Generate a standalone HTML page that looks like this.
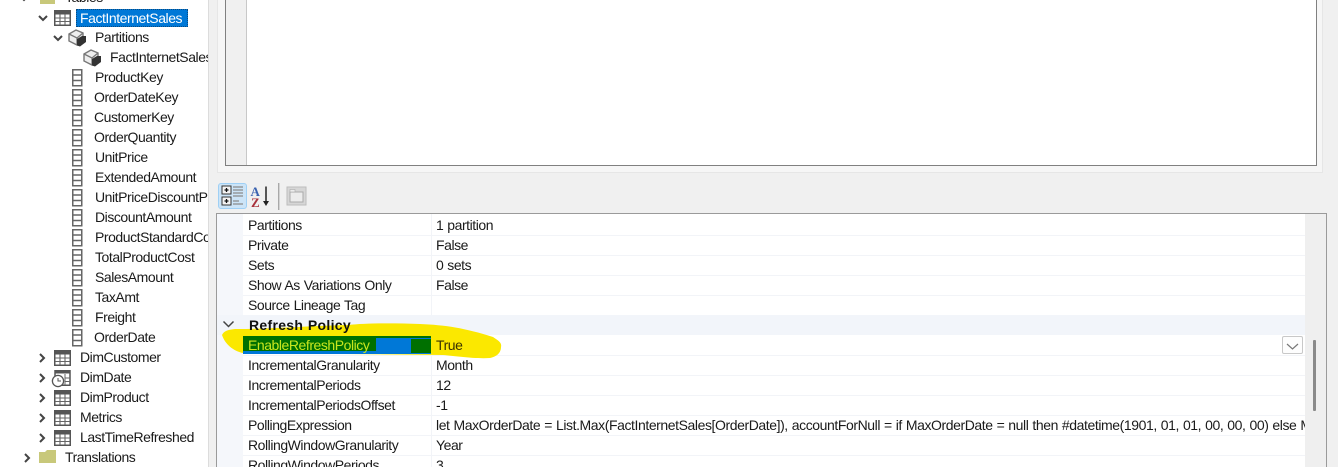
<!DOCTYPE html>
<html><head><meta charset="utf-8">
<style>
html,body{margin:0;padding:0;background:#f0f0f0}
#p{position:relative;width:1338px;height:467px;overflow:hidden;background:#f0f0f0;font-family:"Liberation Sans",sans-serif;font-size:14px;color:#1a1a1a;filter:blur(.35px)}
.t{position:absolute;white-space:nowrap;height:20px;line-height:20px;letter-spacing:-.45px;word-spacing:.5px}
.a{position:absolute}
svg{position:absolute;overflow:visible}
</style></head><body><div id="p">

<!-- tree panel -->
<div class="a" style="left:0;top:0;width:208px;height:467px;background:#fff"></div>
<div class="a" style="left:208px;top:0;width:1px;height:467px;background:#dcdcdc"></div>

<svg width="0" height="0" style="left:0;top:0">
<defs>
<g id="tbl"><rect x=".75" y=".75" width="15.5" height="14.5" fill="#fff" stroke="#555" stroke-width="1.5"/><rect x="1" y="1" width="15" height="3.5" fill="#555"/><path d="M6 4v11M11 4v11M1 8h15M1 11.5h15" stroke="#666" stroke-width="1.1" fill="none"/></g>
<g id="col"><rect x=".75" y=".75" width="9" height="16" fill="#fff" stroke="#666" stroke-width="1.5"/><path d="M1 6h8.5M1 11.5h8.5" stroke="#666" stroke-width="1.4"/></g>
<g id="cube"><path d="M1 5l7-4 7 3v7l-6 5-8-4z" fill="#eee" stroke="#777" stroke-width="1.4"/><path d="M1 5l8 4 6-5M9 9v7" stroke="#777" stroke-width="1.3" fill="none"/><path d="M9 10l5-3h4v6l-6 4.5-3-1z" fill="#333"/></g>
<path id="ex" d="M0 0l4 4 4-4" fill="none" stroke="#444" stroke-width="2"/>
<path id="co" d="M0 0l4 4-4 4" fill="none" stroke="#444" stroke-width="2"/>
</defs>
</svg>

<svg width="208" height="467" style="left:0;top:0">
<use href="#ex" x="20" y="-4"/>
<path d="M40-3h13l2 2v5H40z" fill="#c8c87a"/>
<use href="#ex" x="39" y="16"/>
<use href="#tbl" x="54" y="10"/>
<use href="#ex" x="54" y="36"/>
<use href="#cube" x="68" y="29"/>
<use href="#cube" x="83" y="49"/>
<use href="#col" x="72" y="69"/><use href="#col" x="72" y="89"/><use href="#col" x="72" y="109"/><use href="#col" x="72" y="129"/><use href="#col" x="72" y="149"/><use href="#col" x="72" y="169"/><use href="#col" x="72" y="189"/><use href="#col" x="72" y="209"/><use href="#col" x="72" y="229"/><use href="#col" x="72" y="249"/><use href="#col" x="72" y="269"/><use href="#col" x="72" y="289"/><use href="#col" x="72" y="309"/><use href="#col" x="72" y="329"/>
<use href="#co" x="40" y="354"/><use href="#tbl" x="54" y="350"/>
<use href="#co" x="40" y="374"/>
<rect x="55" y="370.75" width="15" height="14.5" fill="#fff" stroke="#555" stroke-width="1.5"/><rect x="55" y="370" width="15" height="3.5" fill="#555"/><path d="M65 374v11M65 378h5M65 381.5h5" stroke="#666" fill="none"/>
<circle cx="58" cy="381" r="5.6" fill="#fff" stroke="#555" stroke-width="1.3"/><path d="M58 378v3h3" stroke="#555" fill="none"/>
<use href="#co" x="40" y="394"/><use href="#tbl" x="54" y="390"/>
<use href="#co" x="40" y="414"/><use href="#tbl" x="54" y="410"/>
<use href="#co" x="40" y="434"/><use href="#tbl" x="54" y="430"/>
<use href="#co" x="25" y="454"/>
<path d="M39 452h6l2-2h9v1l0 12H39z" fill="#c8c87a"/>
</svg>

<div class="a" style="left:76px;top:9px;width:112px;height:18px;background:#0078d7;outline:1px dotted #0a4a80;outline-offset:-1px"></div>
<div class="t" style="left:65px;top:-13px">Tables</div>
<div class="t" style="left:80px;top:8px;color:#fff">FactInternetSales</div>
<div class="t" style="left:95px;top:27px">Partitions</div>
<div class="a" style="left:110px;top:47px;width:98px;height:20px;overflow:hidden"><div class="t" style="left:0;top:0">FactInternetSales</div></div>
<div class="t" style="left:95px;top:67px">ProductKey</div>
<div class="t" style="left:94px;top:87px">OrderDateKey</div>
<div class="t" style="left:94px;top:107px">CustomerKey</div>
<div class="t" style="left:94px;top:127px">OrderQuantity</div>
<div class="t" style="left:95px;top:147px">UnitPrice</div>
<div class="t" style="left:95px;top:167px">ExtendedAmount</div>
<div class="a" style="left:95px;top:187px;width:113px;height:20px;overflow:hidden"><div class="t" style="left:0;top:0">UnitPriceDiscountPct</div></div>
<div class="t" style="left:95px;top:207px">DiscountAmount</div>
<div class="a" style="left:95px;top:227px;width:113px;height:20px;overflow:hidden"><div class="t" style="left:0;top:0">ProductStandardCost</div></div>
<div class="t" style="left:95px;top:247px">TotalProductCost</div>
<div class="t" style="left:95px;top:267px">SalesAmount</div>
<div class="t" style="left:95px;top:287px">TaxAmt</div>
<div class="t" style="left:95px;top:307px">Freight</div>
<div class="t" style="left:94px;top:327px">OrderDate</div>
<div class="t" style="left:80px;top:347px">DimCustomer</div>
<div class="t" style="left:80px;top:367px">DimDate</div>
<div class="t" style="left:80px;top:387px">DimProduct</div>
<div class="t" style="left:80px;top:407px">Metrics</div>
<div class="t" style="left:80px;top:427px">LastTimeRefreshed</div>
<div class="t" style="left:65px;top:447px">Translations</div>

<!-- top editor -->
<div class="a" style="left:217px;top:0;width:1106px;height:173px;background:#f6f6f6;border:1px solid #e6e6e6;border-top:0;box-sizing:border-box"></div>
<div class="a" style="left:225px;top:-2px;width:1092px;height:168px;background:#fff;border:1px solid #808080;box-sizing:border-box"></div>
<div class="a" style="left:226px;top:0;width:20px;height:165px;background:#f0f0f0;border-right:1px solid #c8c8c8"></div>

<!-- toolbar -->
<div class="a" style="left:218px;top:183px;width:29px;height:26px;background:#cce4f7;border:1px solid #9fd0f5;border-radius:3px;box-sizing:border-box"></div>
<svg width="100" height="30" style="left:215px;top:180px">
<rect x="7" y="6" width="9" height="8" fill="#f4f4f4" stroke="#333"/><path d="M9.5 10h4M11.5 8v4" stroke="#111" stroke-width="1.3"/>
<rect x="7" y="17" width="9" height="8" fill="#f4f4f4" stroke="#333"/><path d="M9.5 21h4M11.5 19v4" stroke="#111" stroke-width="1.3"/>
<path d="M18 7h10M18 10h10M18 13h10M18 16h10M18 21h6M18 24h10" stroke="#8a8a8a" stroke-width="1.2"/>
<text x="35.5" y="16" font-family="Liberation Serif" font-weight="700" font-size="13" fill="#3a62b0">A</text>
<text x="36" y="27" font-family="Liberation Serif" font-weight="700" font-size="13" fill="#a8323c">Z</text>
<path d="M51 6.5v17" stroke="#222" stroke-width="1.5"/><path d="M48 21h6l-3 5z" fill="#222"/>
<rect x="63" y="3" width="1.4" height="27" fill="#a8a8a8"/>
<rect x="72" y="7" width="19" height="18" fill="#d6d6d6" stroke="#bdbdbd"/><rect x="75" y="12" width="13" height="10" fill="#ececec" stroke="#aaa"/><rect x="75" y="9.5" width="5" height="2.5" fill="#ececec" stroke="#aaa" stroke-width=".6"/>
</svg>

<!-- property grid -->
<div class="a" style="left:216px;top:213px;width:1111px;height:260px;background:#fff;border:1px solid #9a9a9a;box-sizing:border-box"></div>
<div class="a" style="left:217px;top:214px;width:26px;height:253px;background:#f5f7fb"></div>
<div class="a" style="left:1305px;top:214px;width:21px;height:253px;background:#efefef"></div>
<div class="a" style="left:1313px;top:340px;width:3px;height:71px;background:#8a8a8a;border-radius:1px"></div>
<div class="a" style="left:431px;top:214px;width:1px;height:253px;background:#f2f4f8"></div>
<div class="a" style="left:243px;top:235px;width:1062px;height:1px;background:#f2f4f8"></div>
<div class="a" style="left:243px;top:255px;width:1062px;height:1px;background:#f2f4f8"></div>
<div class="a" style="left:243px;top:275px;width:1062px;height:1px;background:#f2f4f8"></div>
<div class="a" style="left:243px;top:295px;width:1062px;height:1px;background:#f2f4f8"></div>
<div class="a" style="left:217px;top:315px;width:1088px;height:20px;background:#f2f5fa"></div>
<div class="a" style="left:243px;top:355px;width:1062px;height:1px;background:#f2f4f8"></div>
<div class="a" style="left:243px;top:375px;width:1062px;height:1px;background:#f2f4f8"></div>
<div class="a" style="left:243px;top:395px;width:1062px;height:1px;background:#f2f4f8"></div>
<div class="a" style="left:243px;top:415px;width:1062px;height:1px;background:#f2f4f8"></div>
<div class="a" style="left:243px;top:435px;width:1062px;height:1px;background:#f2f4f8"></div>
<div class="a" style="left:243px;top:455px;width:1062px;height:1px;background:#f2f4f8"></div>

<!-- yellow highlight -->
<svg width="320" height="60" style="left:205px;top:310px">
<path d="M17 25C19 21 22 20 30 19C70 19 100 16 143 15C160 13 190 13 215 14C240 15 260 18 288 27C294 31 297 33 296 37C296 41 294 46 285 48C270 49 250 46 238 45L38 43C28 41 20 34 17 25Z" fill="#fbe800"/>
<rect x="38" y="26" width="188" height="18" fill="#0078d7"/>
<rect x="38" y="26" width="133" height="15" fill="#007000"/>
<rect x="171" y="26" width="55" height="2" fill="#007000"/>
<rect x="206" y="29" width="20" height="14" fill="#007000"/>
</svg>
<svg width="16" height="10" style="left:222px;top:320px"><path d="M1.5 1.5l5 5 5-5" fill="none" stroke="#444" stroke-width="1.5"/></svg>

<div class="t" style="left:248px;top:215px">Partitions</div><div class="t" style="left:436px;top:215px">1 partition</div>
<div class="t" style="left:248px;top:235px">Private</div><div class="t" style="left:436px;top:235px">False</div>
<div class="t" style="left:248px;top:255px">Sets</div><div class="t" style="left:436px;top:255px">0 sets</div>
<div class="t" style="left:248px;top:275px">Show As Variations Only</div><div class="t" style="left:436px;top:275px">False</div>
<div class="t" style="left:248px;top:295px">Source Lineage Tag</div>
<div class="t" style="left:249px;top:315px;font-weight:700;color:#111;letter-spacing:.3px">Refresh Policy</div>
<div class="t" style="left:248px;top:335px;color:#c8e61e">EnableRefreshPolicy</div><div class="t" style="left:436px;top:335px;color:#3a3300">True</div>
<div class="t" style="left:248px;top:355px">IncrementalGranularity</div><div class="t" style="left:436px;top:355px">Month</div>
<div class="t" style="left:248px;top:375px">IncrementalPeriods</div><div class="t" style="left:436px;top:375px">12</div>
<div class="t" style="left:248px;top:395px">IncrementalPeriodsOffset</div><div class="t" style="left:436px;top:395px">-1</div>
<div class="t" style="left:248px;top:415px">PollingExpression</div>
<div class="a" style="left:436px;top:415px;width:869px;height:20px;overflow:hidden"><div class="t" style="left:0;top:0;letter-spacing:-.42px">let MaxOrderDate = List.Max(FactInternetSales[OrderDate]), accountForNull = if MaxOrderDate = null then #datetime(1901, 01, 01, 00, 00, 00) else MaxOrderDate in accountForNull</div></div>
<div class="t" style="left:248px;top:435px">RollingWindowGranularity</div><div class="t" style="left:436px;top:435px">Year</div>
<div class="t" style="left:248px;top:455px">RollingWindowPeriods</div><div class="t" style="left:436px;top:455px">3</div>

<div class="a" style="left:1282px;top:336px;width:21px;height:18px;background:#fdfdfd;border:1px solid #c8c8c8;border-radius:2px;box-sizing:border-box"></div>
<svg width="14" height="8" style="left:1286px;top:343px"><path d="M1 1l5.5 5L12 1" fill="none" stroke="#777" stroke-width="1.2"/></svg>

</div></body></html>
